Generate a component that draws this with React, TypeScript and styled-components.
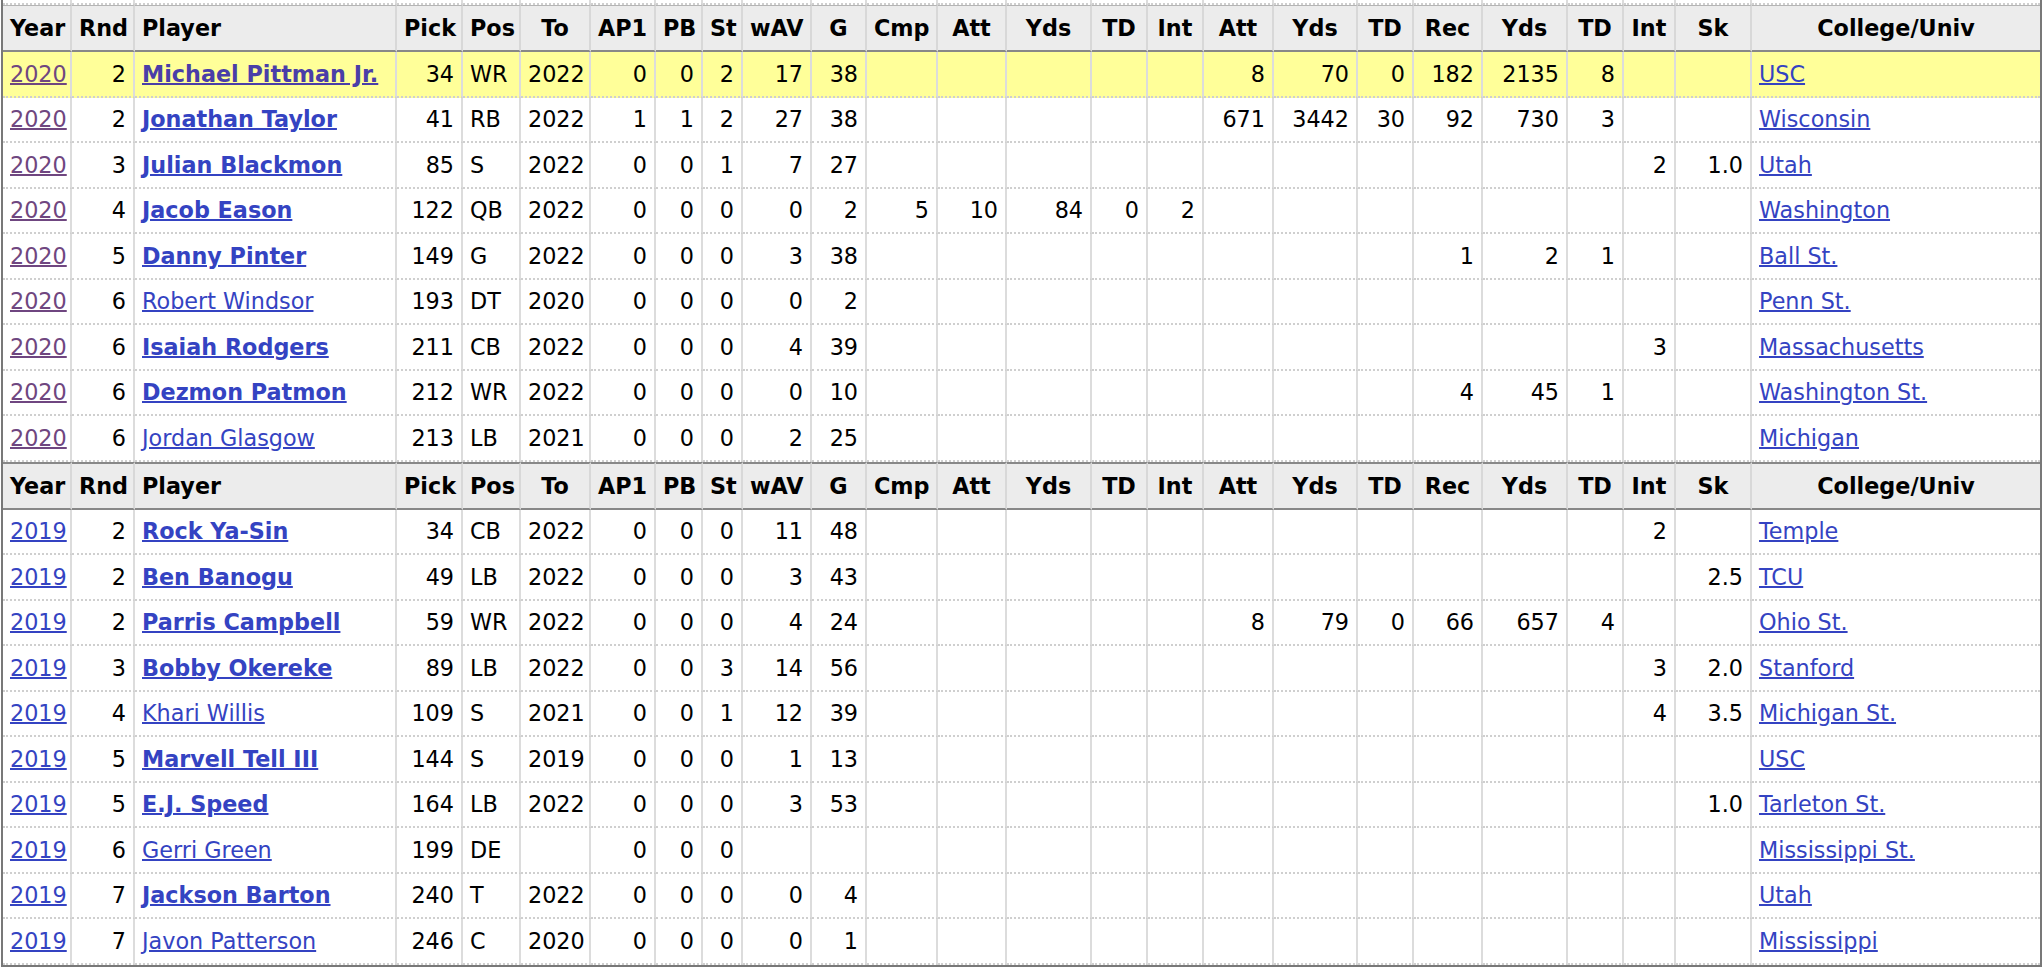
import React from "react";
import styled, { createGlobalStyle } from "styled-components";

const Global = createGlobalStyle`
  html, body { margin: 0; padding: 0; background: #fff; }
  body { font-family: "DejaVu Sans", Verdana, sans-serif; }
`;

type Align = "left" | "right" | "center";
type ColDef = { label: string; width: number; align: Align; headAlign?: Align };

const COLS: ColDef[] = [
  { label: "Year", width: 69, align: "left" },
  { label: "Rnd", width: 63, align: "right" },
  { label: "Player", width: 262, align: "left", headAlign: "left" },
  { label: "Pick", width: 66, align: "right" },
  { label: "Pos", width: 58, align: "left" },
  { label: "To", width: 70, align: "left" },
  { label: "AP1", width: 65, align: "right" },
  { label: "PB", width: 47, align: "right" },
  { label: "St", width: 40, align: "right" },
  { label: "wAV", width: 69, align: "right" },
  { label: "G", width: 55, align: "right" },
  { label: "Cmp", width: 71, align: "right" },
  { label: "Att", width: 69, align: "right" },
  { label: "Yds", width: 85, align: "right" },
  { label: "TD", width: 56, align: "right" },
  { label: "Int", width: 56, align: "right" },
  { label: "Att", width: 70, align: "right" },
  { label: "Yds", width: 84, align: "right" },
  { label: "TD", width: 56, align: "right" },
  { label: "Rec", width: 69, align: "right" },
  { label: "Yds", width: 85, align: "right" },
  { label: "TD", width: 56, align: "right" },
  { label: "Int", width: 52, align: "right" },
  { label: "Sk", width: 76, align: "right" },
  { label: "College/Univ", width: 288, align: "left" },
];

type Pick = {
  year: string;
  visited: boolean;
  rnd: string;
  player: string;
  bold: boolean;
  stats: string[];
  college: string;
  hl?: boolean;
};

const e = "";
const P = (
  year: string,
  rnd: string,
  player: string,
  bold: boolean,
  stats: string[],
  college: string,
  hl = false
): Pick => ({ year, visited: year === "2020", rnd, player, bold, stats, college, hl });

const GROUP_2020: Pick[] = [
  P("2020", "2", "Michael Pittman Jr.", true, ["34", "WR", "2022", "0", "0", "2", "17", "38", e, e, e, e, e, "8", "70", "0", "182", "2135", "8", e, e], "USC", true),
  P("2020", "2", "Jonathan Taylor", true, ["41", "RB", "2022", "1", "1", "2", "27", "38", e, e, e, e, e, "671", "3442", "30", "92", "730", "3", e, e], "Wisconsin"),
  P("2020", "3", "Julian Blackmon", true, ["85", "S", "2022", "0", "0", "1", "7", "27", e, e, e, e, e, e, e, e, e, e, e, "2", "1.0"], "Utah"),
  P("2020", "4", "Jacob Eason", true, ["122", "QB", "2022", "0", "0", "0", "0", "2", "5", "10", "84", "0", "2", e, e, e, e, e, e, e, e], "Washington"),
  P("2020", "5", "Danny Pinter", true, ["149", "G", "2022", "0", "0", "0", "3", "38", e, e, e, e, e, e, e, e, "1", "2", "1", e, e], "Ball St."),
  P("2020", "6", "Robert Windsor", false, ["193", "DT", "2020", "0", "0", "0", "0", "2", e, e, e, e, e, e, e, e, e, e, e, e, e], "Penn St."),
  P("2020", "6", "Isaiah Rodgers", true, ["211", "CB", "2022", "0", "0", "0", "4", "39", e, e, e, e, e, e, e, e, e, e, e, "3", e], "Massachusetts"),
  P("2020", "6", "Dezmon Patmon", true, ["212", "WR", "2022", "0", "0", "0", "0", "10", e, e, e, e, e, e, e, e, "4", "45", "1", e, e], "Washington St."),
  P("2020", "6", "Jordan Glasgow", false, ["213", "LB", "2021", "0", "0", "0", "2", "25", e, e, e, e, e, e, e, e, e, e, e, e, e], "Michigan"),
];

const GROUP_2019: Pick[] = [
  P("2019", "2", "Rock Ya-Sin", true, ["34", "CB", "2022", "0", "0", "0", "11", "48", e, e, e, e, e, e, e, e, e, e, e, "2", e], "Temple"),
  P("2019", "2", "Ben Banogu", true, ["49", "LB", "2022", "0", "0", "0", "3", "43", e, e, e, e, e, e, e, e, e, e, e, e, "2.5"], "TCU"),
  P("2019", "2", "Parris Campbell", true, ["59", "WR", "2022", "0", "0", "0", "4", "24", e, e, e, e, e, "8", "79", "0", "66", "657", "4", e, e], "Ohio St."),
  P("2019", "3", "Bobby Okereke", true, ["89", "LB", "2022", "0", "0", "3", "14", "56", e, e, e, e, e, e, e, e, e, e, e, "3", "2.0"], "Stanford"),
  P("2019", "4", "Khari Willis", false, ["109", "S", "2021", "0", "0", "1", "12", "39", e, e, e, e, e, e, e, e, e, e, e, "4", "3.5"], "Michigan St."),
  P("2019", "5", "Marvell Tell III", true, ["144", "S", "2019", "0", "0", "0", "1", "13", e, e, e, e, e, e, e, e, e, e, e, e, e], "USC"),
  P("2019", "5", "E.J. Speed", true, ["164", "LB", "2022", "0", "0", "0", "3", "53", e, e, e, e, e, e, e, e, e, e, e, e, "1.0"], "Tarleton St."),
  P("2019", "6", "Gerri Green", false, ["199", "DE", e, "0", "0", "0", e, e, e, e, e, e, e, e, e, e, e, e, e, e, e], "Mississippi St."),
  P("2019", "7", "Jackson Barton", true, ["240", "T", "2022", "0", "0", "0", "0", "4", e, e, e, e, e, e, e, e, e, e, e, e, e], "Utah"),
  P("2019", "7", "Javon Patterson", false, ["246", "C", "2020", "0", "0", "0", "0", "1", e, e, e, e, e, e, e, e, e, e, e, e, e], "Mississippi"),
];

const Page = styled.div`
  padding-left: 1px;
`;

const Table = styled.table`
  width: 2041px;
  table-layout: fixed;
  border-collapse: separate;
  border-spacing: 0;
  border-left: 2px solid #787878;
  border-right: 2px solid #787878;
  border-bottom: 2px solid #787878;
  font-family: "DejaVu Sans", Verdana, sans-serif;
  font-size: 22.3px;
  color: #000;
`;

const Col = styled.col<{ $w: number }>`
  width: ${(p) => p.$w}px;
`;

const Cell = styled.td<{ $align: Align; $hl?: boolean }>`
  box-sizing: border-box;
  height: 45.5px;
  padding: 0 7px;
  text-align: ${(p) => p.$align};
  white-space: nowrap;
  overflow: hidden;
  background: ${(p) => (p.$hl ? "#ffff99" : "#fff")};
  border-right: 2px solid #dcdcdc;
  border-bottom: 2px dotted #cfcfcf;
  &:last-child { border-right: none; }
`;

const TailCell = styled.td`
  box-sizing: border-box;
  height: 5px;
  padding: 0;
  border-right: 2px solid #dcdcdc;
  border-bottom: 2px dotted #cfcfcf;
  &:last-child { border-right: none; }
`;

const Head = styled.th<{ $align: Align; $first?: boolean }>`
  box-sizing: border-box;
  height: ${(p) => (p.$first ? 47 : 48)}px;
  padding: 0 7px;
  text-align: ${(p) => p.$align};
  white-space: nowrap;
  font-weight: bold;
  background: #ececec;
  border-right: 2px solid #d8d8d8;
  border-top: ${(p) => (p.$first ? "1px solid #b4b4b4" : "2px solid #888")};
  border-bottom: 2px solid #888;
  &:last-child { border-right: none; }
`;

const Link = styled.a<{ $bold?: boolean; $color: string }>`
  color: ${(p) => p.$color};
  font-weight: ${(p) => (p.$bold ? "bold" : "normal")};
  text-decoration: underline;
  text-underline-offset: 1px;
`;

const BLUE = "#3443c2";
const VISITED = "#6f4680";
const HL_LINK = "#4a3ea8";

function HeaderRow({ first }: { first?: boolean }) {
  return (
    <tr>
      {COLS.map((c, i) => (
        <Head key={i} $align={c.headAlign ?? "center"} $first={first}>
          {c.label}
        </Head>
      ))}
    </tr>
  );
}

function DataRow({ p }: { p: Pick }) {
  return (
    <tr>
      <Cell $align="left" $hl={p.hl}>
        <Link href="#" $color={p.visited ? VISITED : BLUE}>{p.year}</Link>
      </Cell>
      <Cell $align="right" $hl={p.hl}>{p.rnd}</Cell>
      <Cell $align="left" $hl={p.hl}>
        <Link href="#" $bold={p.bold} $color={p.hl ? HL_LINK : BLUE}>{p.player}</Link>
      </Cell>
      {p.stats.map((s, i) => (
        <Cell key={i} $align={COLS[i + 3].align} $hl={p.hl}>{s}</Cell>
      ))}
      <Cell $align="left" $hl={p.hl}>
        <Link href="#" $color={BLUE}>{p.college}</Link>
      </Cell>
    </tr>
  );
}

export default function App() {
  return (
    <Page>
      <Global />
      <Table>
        <colgroup>
          {COLS.map((c, i) => (
            <Col key={i} $w={c.width} />
          ))}
        </colgroup>
        <tbody>
          <tr>
            {COLS.map((_, i) => (
              <TailCell key={i} />
            ))}
          </tr>
          <HeaderRow first />
          {GROUP_2020.map((p, i) => (
            <DataRow key={"a" + i} p={p} />
          ))}
          <HeaderRow />
          {GROUP_2019.map((p, i) => (
            <DataRow key={"b" + i} p={p} />
          ))}
        </tbody>
      </Table>
    </Page>
  );
}
